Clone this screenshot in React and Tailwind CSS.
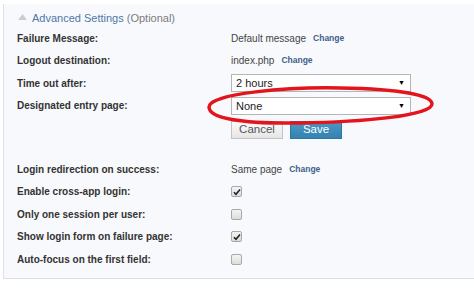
import React from 'react';

function Row({ label, children, className = '' }) {
  return (
    <div className={`flex items-center h-[22.5px] ${className}`}>
      <div className="w-[214px] shrink-0 text-[10px] font-bold text-[#333]">{label}</div>
      <div className="flex items-center text-[10px] text-[#444]">{children}</div>
    </div>
  );
}

function Change() {
  return <span className="ml-[7px] text-[8.5px] font-bold text-[#3f5f8c]">Change</span>;
}

function Select({ value }) {
  return (
    <div className="w-[180px] h-[18px] bg-white border border-[#b5b5b5] flex items-center justify-between pl-[4px] pr-[5px] text-[11px] text-[#222]">
      <span>{value}</span>
      <span className="text-[7px] text-black">▼</span>
    </div>
  );
}

function Checkbox({ checked }) {
  return (
    <div className="w-[11px] h-[11px] rounded-[2px] border border-[#a8a8a8] bg-gradient-to-b from-[#f4f4f4] to-[#dcdcdc] flex items-center justify-center">
      {checked && (
        <svg width="8" height="8" viewBox="0 0 8 8">
          <path d="M1 4.2 L3 6.3 L7 1.5" fill="none" stroke="#222" strokeWidth="1.6" />
        </svg>
      )}
    </div>
  );
}

export default function App() {
  return (
    <div className="w-[474px] h-[288px] bg-white relative overflow-hidden font-['Liberation_Sans',Arial,sans-serif]">
      <div className="ml-[3px] mt-[4px] w-[490px] h-[275px] bg-[#f8f9fc] border-l border-b border-[#dde0e5] pl-[13px] pt-[5px]">
        {/* header */}
        <div className="flex items-center h-[18px] text-[11px]">
          <svg width="9" height="6" viewBox="0 0 9 6" className="ml-[1px] mb-[2px]">
            <path d="M0 6 L4.5 0 L9 6 Z" fill="#c9ced5" />
          </svg>
          <span className="ml-[5px] text-[#4d78a6]">Advanced Settings</span>
          <span className="ml-[3px] text-[#7b7b7b]">(Optional)</span>
        </div>

        <Row label="Failure Message:">
          Default message <Change />
        </Row>
        <Row label="Logout destination:">
          index.php <Change />
        </Row>
        <Row label="Time out after:">
          <Select value="2 hours" />
        </Row>
        <Row label="Designated entry page:">
          <Select value="None" />
        </Row>
        <div className="flex items-center h-[26px] pl-[214px] gap-[7px]">
          <button className="w-[52px] h-[18px] border border-[#c3c3c3] bg-gradient-to-b from-[#fafafa] to-[#e6e6e6] text-[11.5px] text-[#555] leading-none">
            Cancel
          </button>
          <button className="w-[52px] h-[18px] border border-[#2f77a3] bg-gradient-to-b from-[#4a98c6] to-[#3582b1] text-[11.5px] text-white leading-none">
            Save
          </button>
        </div>

        <div className="mt-[15px]">
          <Row label="Login redirection on success:">
            Same page <Change />
          </Row>
          <Row label="Enable cross-app login:">
            <Checkbox checked />
          </Row>
          <Row label="Only one session per user:">
            <Checkbox />
          </Row>
          <Row label="Show login form on failure page:">
            <Checkbox checked />
          </Row>
          <Row label="Auto-focus on the first field:">
            <Checkbox />
          </Row>
        </div>
      </div>

      {/* red annotation ellipse */}
      <svg className="absolute left-0 top-0 pointer-events-none" width="474" height="288">
        <path
          d="M209 107 C209 93 290 87 340 88 C400 89 432 95 432 104 C432 116 360 122 300 123 C240 124 209 118 209 107 Z"
          fill="none"
          stroke="#e3141c"
          strokeWidth="3.5"
        />
      </svg>
    </div>
  );
}
